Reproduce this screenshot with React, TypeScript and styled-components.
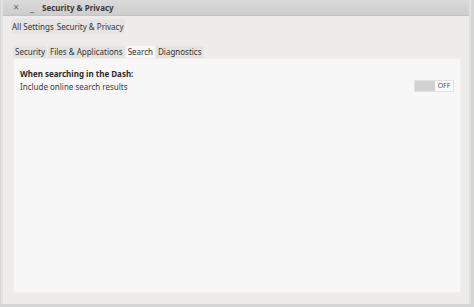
import React from "react";
import styled, { createGlobalStyle } from "styled-components";

const GlobalStyle = createGlobalStyle`
  html, body {
    margin: 0;
    padding: 0;
    background: #d6d6d6;
  }
  body {
    font-family: "Noto Sans", "DejaVu Sans", sans-serif;
    font-size: 8px;
    color: #3c3c3c;
  }
`;

const tabs = ["Security", "Files & Applications", "Search", "Diagnostics"];

export default function App() {
  return (
    <>
      <GlobalStyle />
      <Window>
        <TitleBar>
          <TitleButton>×</TitleButton>
          <TitleButton>_</TitleButton>
          <Title>Security &amp; Privacy</Title>
        </TitleBar>
        <Body>
          <Breadcrumb>
            <Crumb>All Settings</Crumb>
            <Crumb>Security &amp; Privacy</Crumb>
          </Breadcrumb>
          <TabBar>
            {tabs.map((t) => (
              <Tab key={t} active={t === "Search"}>
                {t}
              </Tab>
            ))}
          </TabBar>
          <Panel>
            <Heading>When searching in the Dash:</Heading>
            <Row>
              <Label>Include online search results</Label>
              <Switch>
                <SwitchKnob />
                <SwitchText>OFF</SwitchText>
              </Switch>
            </Row>
          </Panel>
        </Body>
      </Window>
    </>
  );
}

const Window = styled.div`
  width: 470px;
  height: 304px;
  margin-left: 1px;
  display: flex;
  flex-direction: column;
  background: #edecea;
  border-left: 2px solid #e2e2e1;
  border-right: 2px solid #e0e0df;
  box-sizing: border-box;
`;

const TitleBar = styled.div`
  height: 15px;
  display: flex;
  align-items: center;
  padding-left: 5px;
  background: linear-gradient(#dadada, #cdcdcd);
  border-bottom: 1px solid #c4c4c4;
  flex-shrink: 0;
`;

const TitleButton = styled.span`
  width: 16px;
  font-size: 10px;
  color: #6a6a6a;
  line-height: 15px;
  text-align: center;
`;

const Title = styled.span`
  margin-left: 2px;
  font-weight: bold;
  font-size: 8px;
  color: #3a3a3a;
`;

const Body = styled.div`
  flex: 1;
  display: flex;
  flex-direction: column;
  padding: 3px 8px 11px 8px;
`;

const Breadcrumb = styled.div`
  display: flex;
  align-self: flex-start;
  gap: 3px;
  padding: 2px 1px;
  background: #e6e5e3;
  border-radius: 2px;
`;

const Crumb = styled.span`
  line-height: 11px;
  color: #333;
`;

const TabBar = styled.div`
  display: flex;
  gap: 1px;
  margin-top: 12px;
  padding-left: 2px;
`;

const Tab = styled.span<{ active?: boolean }>`
  padding: 1px 2px;
  line-height: 10px;
  color: #333;
  background: ${({ active }) => (active ? "#f8f8f8" : "#e4e3e1")};
`;

const Panel = styled.div`
  flex: 1;
  margin-left: 2px;
  padding: 9px 6px;
  background: #f7f7f7;
  border: 1px solid #f0efee;
`;

const Heading = styled.div`
  font-weight: bold;
  color: #2a2a2a;
  line-height: 11px;
`;

const Row = styled.div`
  display: flex;
  align-items: center;
  justify-content: space-between;
  padding-right: 0;
`;

const Label = styled.span`
  line-height: 11px;
  margin-top: 2px;
`;

const Switch = styled.div`
  width: 40px;
  height: 12px;
  display: flex;
  background: #fafafa;
  border: 1px solid #e2e2e2;
  box-sizing: border-box;
`;

const SwitchKnob = styled.div`
  width: 20px;
  background: #d2d2d2;
`;

const SwitchText = styled.span`
  flex: 1;
  text-align: center;
  font-size: 7px;
  line-height: 10px;
  color: #555;
`;
